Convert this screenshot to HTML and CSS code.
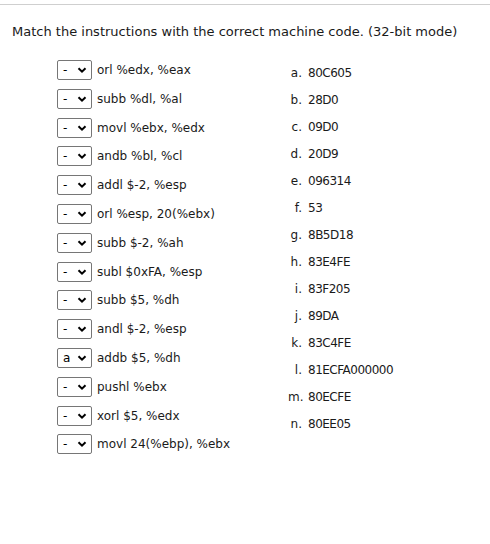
FILE: index.html
```html
<!DOCTYPE html>
<html>
<head>
<meta charset="utf-8">
<link rel="stylesheet" href="styles.css">
</head>
<body>
<div class="question">
  <p class="prompt">Match the instructions with the correct machine code. (32-bit mode)</p>
  <div class="match">
    <ul class="items">
      <li class="item"><span class="sel"><select><option>-</option></select><svg viewBox="0 0 10 10"><path d="M1.5 3.2 L5 6.7 L8.5 3.2"/></svg></span><span>orl %edx, %eax</span></li>
      <li class="item"><span class="sel"><select><option>-</option></select><svg viewBox="0 0 10 10"><path d="M1.5 3.2 L5 6.7 L8.5 3.2"/></svg></span><span>subb %dl, %al</span></li>
      <li class="item"><span class="sel"><select><option>-</option></select><svg viewBox="0 0 10 10"><path d="M1.5 3.2 L5 6.7 L8.5 3.2"/></svg></span><span>movl %ebx, %edx</span></li>
      <li class="item"><span class="sel"><select><option>-</option></select><svg viewBox="0 0 10 10"><path d="M1.5 3.2 L5 6.7 L8.5 3.2"/></svg></span><span>andb %bl, %cl</span></li>
      <li class="item"><span class="sel"><select><option>-</option></select><svg viewBox="0 0 10 10"><path d="M1.5 3.2 L5 6.7 L8.5 3.2"/></svg></span><span>addl $-2, %esp</span></li>
      <li class="item"><span class="sel"><select><option>-</option></select><svg viewBox="0 0 10 10"><path d="M1.5 3.2 L5 6.7 L8.5 3.2"/></svg></span><span>orl %esp, 20(%ebx)</span></li>
      <li class="item"><span class="sel"><select><option>-</option></select><svg viewBox="0 0 10 10"><path d="M1.5 3.2 L5 6.7 L8.5 3.2"/></svg></span><span>subb $-2, %ah</span></li>
      <li class="item"><span class="sel"><select><option>-</option></select><svg viewBox="0 0 10 10"><path d="M1.5 3.2 L5 6.7 L8.5 3.2"/></svg></span><span>subl $0xFA, %esp</span></li>
      <li class="item"><span class="sel"><select><option>-</option></select><svg viewBox="0 0 10 10"><path d="M1.5 3.2 L5 6.7 L8.5 3.2"/></svg></span><span>subb $5, %dh</span></li>
      <li class="item"><span class="sel"><select><option>-</option></select><svg viewBox="0 0 10 10"><path d="M1.5 3.2 L5 6.7 L8.5 3.2"/></svg></span><span>andl $-2, %esp</span></li>
      <li class="item"><span class="sel"><select><option>a</option></select><svg viewBox="0 0 10 10"><path d="M1.5 3.2 L5 6.7 L8.5 3.2"/></svg></span><span>addb $5, %dh</span></li>
      <li class="item"><span class="sel"><select><option>-</option></select><svg viewBox="0 0 10 10"><path d="M1.5 3.2 L5 6.7 L8.5 3.2"/></svg></span><span>pushl %ebx</span></li>
      <li class="item"><span class="sel"><select><option>-</option></select><svg viewBox="0 0 10 10"><path d="M1.5 3.2 L5 6.7 L8.5 3.2"/></svg></span><span>xorl $5, %edx</span></li>
      <li class="item"><span class="sel"><select><option>-</option></select><svg viewBox="0 0 10 10"><path d="M1.5 3.2 L5 6.7 L8.5 3.2"/></svg></span><span>movl 24(%ebp), %ebx</span></li>
    </ul>
    <ul class="codes">
      <li><span class="lbl">a.</span><span class="code">80C605</span></li>
      <li><span class="lbl">b.</span><span class="code">28D0</span></li>
      <li><span class="lbl">c.</span><span class="code">09D0</span></li>
      <li><span class="lbl">d.</span><span class="code">20D9</span></li>
      <li><span class="lbl">e.</span><span class="code">096314</span></li>
      <li><span class="lbl">f.</span><span class="code">53</span></li>
      <li><span class="lbl">g.</span><span class="code">8B5D18</span></li>
      <li><span class="lbl">h.</span><span class="code">83E4FE</span></li>
      <li><span class="lbl">i.</span><span class="code">83F205</span></li>
      <li><span class="lbl">j.</span><span class="code">89DA</span></li>
      <li><span class="lbl">k.</span><span class="code">83C4FE</span></li>
      <li><span class="lbl">l.</span><span class="code">81ECFA000000</span></li>
      <li><span class="lbl">m.</span><span class="code">80ECFE</span></li>
      <li><span class="lbl">n.</span><span class="code">80EE05</span></li>
    </ul>
  </div>
</div>
</body>
</html>
```

FILE: styles.css
```css
html, body {
  margin: 0;
  padding: 0;
  background: #fff;
}
body {
  font-family: "DejaVu Sans", Verdana, sans-serif;
  font-size: 12px;
  color: #1a1a1a;
}
.question {
  border-top: 1px solid #cfcfcf;
  margin-top: 4px;
  padding: 18px 12px 0 12px;
}
.prompt {
  margin: 0 0 20px 0;
  font-size: 13px;
  line-height: 17px;
}
.match {
  display: flex;
}
.items {
  list-style: none;
  margin: 0;
  padding: 0 0 0 45px;
  width: 231px;
}
.item {
  display: flex;
  align-items: center;
  height: 20px;
  margin-bottom: 8.8px;
  gap: 5px;
}
.sel {
  position: relative;
  display: inline-block;
  width: 35px;
  height: 20px;
}
.sel select {
  appearance: none;
  -webkit-appearance: none;
  box-sizing: border-box;
  width: 35px;
  height: 20px;
  margin: 0;
  padding: 0 0 0 5px;
  border: 1px solid #767676;
  border-radius: 2px;
  background: #fff;
  font-family: inherit;
  font-size: 12px;
  color: #000;
}
.sel svg {
  position: absolute;
  right: 5px;
  top: 5px;
  width: 10px;
  height: 10px;
  pointer-events: none;
}
.sel svg path {
  fill: none;
  stroke: #000;
  stroke-width: 2;
}
.codes {
  list-style: none;
  margin: 5px 0 0 0;
  padding: 0;
}
.codes li {
  display: flex;
  height: 16px;
  line-height: 16px;
  margin-bottom: 11px;
}
.lbl {
  display: inline-block;
  width: 14px;
  text-align: right;
  margin-right: 6px;
}
.code {
  letter-spacing: -0.5px;
}
```
